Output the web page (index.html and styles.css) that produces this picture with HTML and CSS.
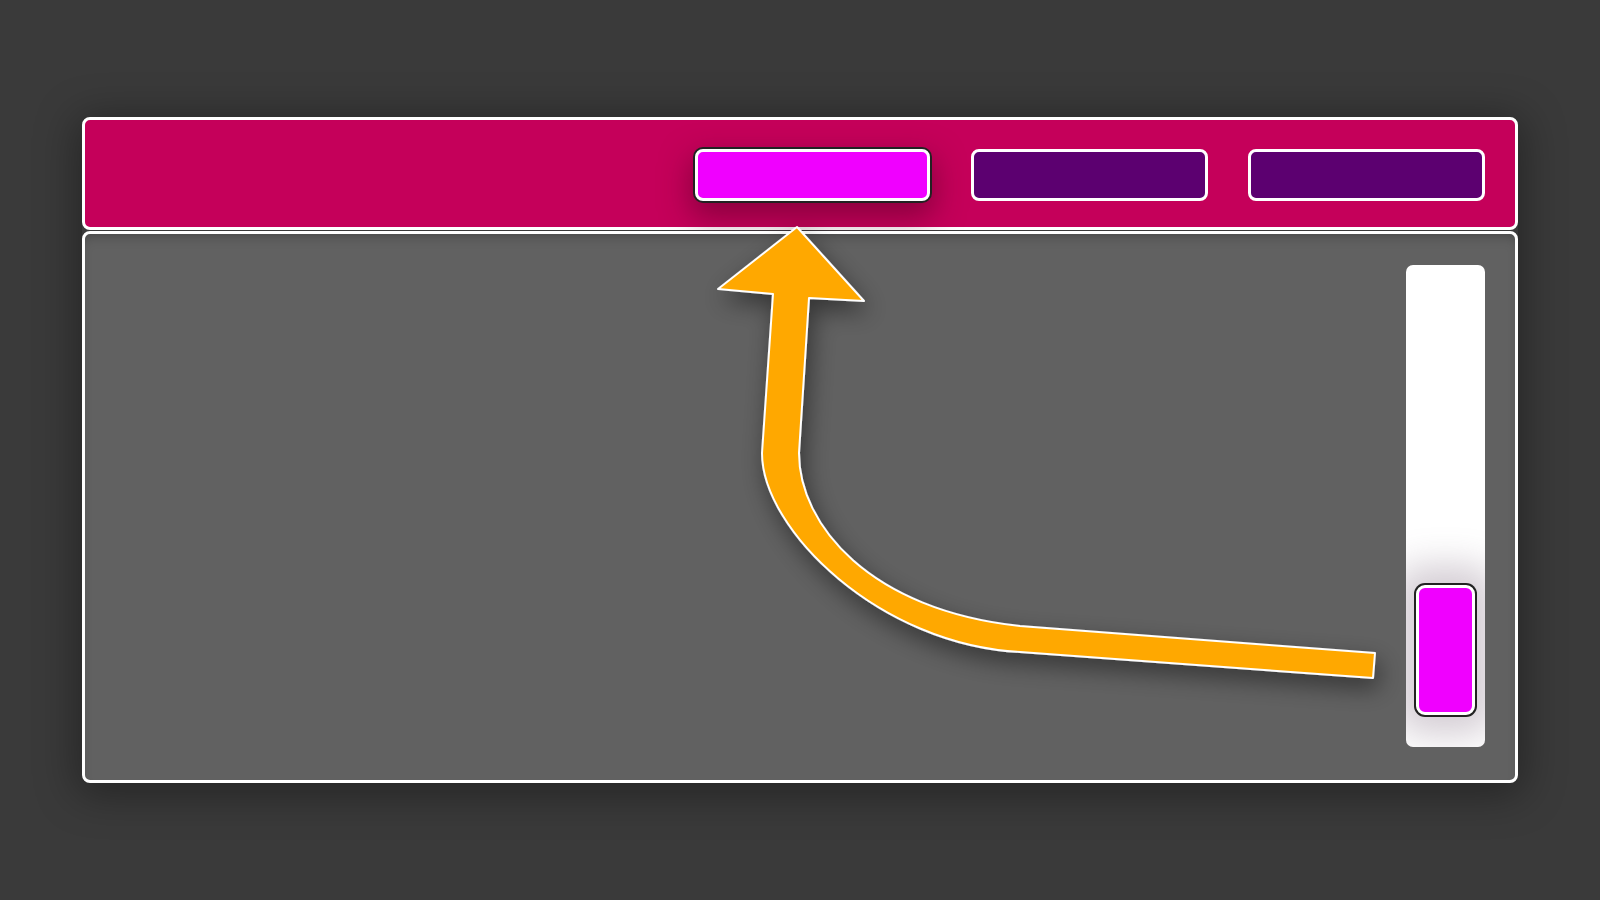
FILE: index.html
```html
<!DOCTYPE html>
<html lang="en">
<head>
<meta charset="utf-8">
<title>Scroll to top</title>
<link rel="stylesheet" href="styles.css">
</head>
<body>
<div class="stage">
  <div class="window">
    <header class="toolbar">
      <div class="btn btn-active"></div>
      <div class="btn"></div>
      <div class="btn"></div>
    </header>
    <main class="content">
      <div class="track">
        <div class="thumb"></div>
      </div>
    </main>
  </div>
  <svg class="arrow" width="1600" height="900" viewBox="0 0 1600 900" aria-hidden="true">
    <defs>
      <filter id="shadow" x="-20%" y="-20%" width="140%" height="140%">
        <feDropShadow dx="4" dy="10" stdDeviation="12" flood-color="#000" flood-opacity="0.45"/>
      </filter>
    </defs>
    <path filter="url(#shadow)" fill="#ffa800" stroke="#ffffff" stroke-width="2" stroke-linejoin="round"
      d="M797 227 L864 301 L809 298 L799 453 C799 525 870 610 1020 626 L1375 653 L1373 678 L1020 652 C880 645 762 530 762 453 L773 294 L718 289 Z"/>
  </svg>
</div>
</body>
</html>
```

FILE: styles.css
```css
html, body {
  margin: 0;
  padding: 0;
}

body {
  width: 1600px;
  height: 900px;
  overflow: hidden;
  background: #3a3a3a;
  font-family: "Liberation Sans", Arial, sans-serif;
}

.stage {
  position: relative;
  width: 1600px;
  height: 900px;
  padding: 117px 0 0 82px;
  box-sizing: border-box;
}

.window {
  width: 1436px;
  display: flex;
  flex-direction: column;
  gap: 1px;
  border-radius: 8px;
  box-shadow: 0 6px 40px 6px rgba(0, 0, 0, 0.35);
}

.toolbar {
  height: 113px;
  box-sizing: border-box;
  background: #c5005a;
  border: 3px solid #ffffff;
  border-radius: 8px;
  display: flex;
  justify-content: flex-end;
  align-items: center;
  gap: 40px;
  padding: 3px 30px 0 0;
}

.btn {
  width: 237px;
  height: 52px;
  box-sizing: border-box;
  background: #5c0070;
  border: 3px solid #ffffff;
  border-radius: 8px;
}

.btn-active {
  width: 235px;
  height: 52px;
  background: #f000ff;
  box-shadow: 0 0 0 2px #222222, 0 12px 30px 4px rgba(90, 0, 40, 0.55);
  margin-right: 1px;
}

.content {
  height: 552px;
  box-sizing: border-box;
  background: #616161;
  border: 3px solid #ffffff;
  border-radius: 8px;
  display: flex;
  justify-content: flex-end;
  align-items: flex-start;
  padding: 31px 30px 0 0;
  box-shadow: inset 0 8px 14px -8px rgba(0, 0, 0, 0.35);
}

.track {
  width: 79px;
  height: 482px;
  box-sizing: border-box;
  background: #ffffff;
  border-radius: 7px;
  overflow: hidden;
  display: flex;
  flex-direction: column;
  justify-content: flex-end;
  align-items: center;
  padding-bottom: 32px;
}

.thumb {
  width: 59px;
  height: 130px;
  box-sizing: border-box;
  background: #f000ff;
  border: 3px solid #ffffff;
  border-radius: 9px;
  box-shadow: 0 0 0 2px #222222, 0 0 36px 20px rgba(120, 100, 120, 0.32);
}

.arrow {
  position: absolute;
  top: 0;
  left: 0;
  pointer-events: none;
}
```
